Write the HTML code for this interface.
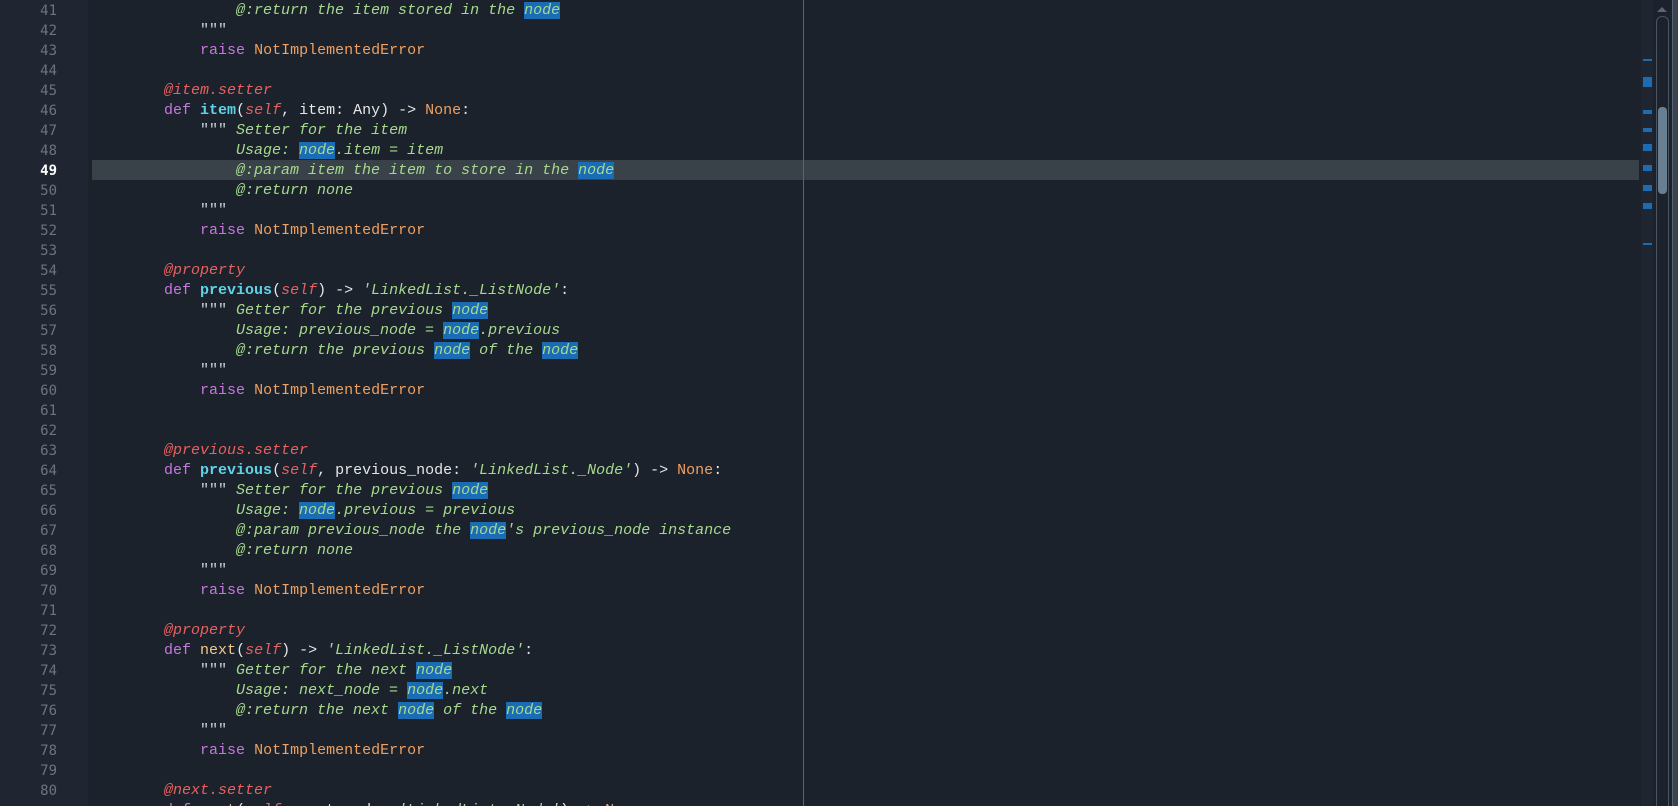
<!DOCTYPE html>
<html><head><style>
*{margin:0;padding:0}
html,body{width:1678px;height:806px;overflow:hidden}
body{background:#1b222c;position:relative;font-family:"Liberation Mono",monospace;font-size:15px}
#g{position:absolute;left:0;top:0;width:88px;height:806px;background:#1f2631}
.n{position:absolute;left:0;width:57px;text-align:right;color:#6b7581;line-height:20px;height:20px;font-family:"DejaVu Sans Mono","Liberation Mono",monospace;font-size:14px}
.cur{color:#fff;font-weight:bold}
#hl{position:absolute;left:92px;top:160px;width:1547px;height:20px;background:#394149}
#ruler{position:absolute;left:803px;top:0;width:1px;height:806px;background:#5a646e}
.l{position:absolute;left:92px;white-space:pre;line-height:20px;height:20px;color:#e6e6e6}
.d{color:#a6d98c;font-style:italic}
.q{color:#c9d1d9}
.k{color:#c678dd}
.f{color:#5fd3e8;font-weight:bold}
.fn{color:#f3c98b}
.dec{color:#e8605f;font-style:italic}
.s{color:#e8605f;font-style:italic}
.o{color:#f0a060}
.st{color:#a6d98c;font-style:italic}
.h{background:#1a6cb5}
#mm{position:absolute;left:1641px;top:0;width:12px;height:806px;background:#1f2631}
.mk{position:absolute;left:1643px;width:9px;background:#1f6bb0}
#sb{position:absolute;left:1653px;top:0;width:19px;height:806px;background:#1b222c}
#tr{position:absolute;left:1656px;top:16px;width:11px;height:800px;border:1px solid #4a5561;border-radius:6px}
#th{position:absolute;left:1658px;top:107px;width:9px;height:87px;background:#6a7e91;border-radius:4px}
#edge{position:absolute;left:1672px;top:0;width:6px;height:806px;background:#3a4350;border-left:1px solid #5a6470}
</style></head><body>
<div id="g"></div>
<div id="hl"></div>
<div id="ruler"></div>
<div id="nums"></div>
<div id="code"></div>
<div id="mm"></div>
<div class="mk" style="top:59px;height:2px"></div>
<div class="mk" style="top:77px;height:10px"></div>
<div class="mk" style="top:110px;height:4px"></div>
<div class="mk" style="top:128px;height:4px"></div>
<div class="mk" style="top:144px;height:7px"></div>
<div class="mk" style="top:165px;height:6px"></div>
<div class="mk" style="top:185px;height:6px"></div>
<div class="mk" style="top:203px;height:6px"></div>
<div class="mk" style="top:243px;height:2px"></div>
<div id="sb"></div>
<div style="position:absolute;left:1657px;top:7px;width:0;height:0;border-left:5px solid transparent;border-right:5px solid transparent;border-bottom:5px solid #5a6672"></div>
<div id="tr"></div>
<div id="th"></div>
<div id="edge"></div>
<script>
var L=[
'            <span class="d">@:return the item stored in the <span class="h">node</span></span>',
'        <span class="q">"""</span>',
'        <span class="k">raise</span> <span class="o">NotImplementedError</span>',
'',
'    <span class="dec">@item.setter</span>',
'    <span class="k">def</span> <span class="f">item</span>(<span class="s">self</span>, item: Any) -&gt; <span class="o">None</span>:',
'        <span class="q">"""</span><span class="d"> Setter for the item</span>',
'            <span class="d">Usage: <span class="h">node</span>.item = item</span>',
'            <span class="d">@:param item the item to store in the <span class="h">node</span></span>',
'            <span class="d">@:return none</span>',
'        <span class="q">"""</span>',
'        <span class="k">raise</span> <span class="o">NotImplementedError</span>',
'',
'    <span class="dec">@property</span>',
'    <span class="k">def</span> <span class="f">previous</span>(<span class="s">self</span>) -&gt; <span class="st">\'LinkedList._ListNode\'</span>:',
'        <span class="q">"""</span><span class="d"> Getter for the previous <span class="h">node</span></span>',
'            <span class="d">Usage: previous_node = <span class="h">node</span>.previous</span>',
'            <span class="d">@:return the previous <span class="h">node</span> of the <span class="h">node</span></span>',
'        <span class="q">"""</span>',
'        <span class="k">raise</span> <span class="o">NotImplementedError</span>',
'',
'',
'    <span class="dec">@previous.setter</span>',
'    <span class="k">def</span> <span class="f">previous</span>(<span class="s">self</span>, previous_node: <span class="st">\'LinkedList._Node\'</span>) -&gt; <span class="o">None</span>:',
'        <span class="q">"""</span><span class="d"> Setter for the previous <span class="h">node</span></span>',
'            <span class="d">Usage: <span class="h">node</span>.previous = previous</span>',
'            <span class="d">@:param previous_node the <span class="h">node</span>\'s previous_node instance</span>',
'            <span class="d">@:return none</span>',
'        <span class="q">"""</span>',
'        <span class="k">raise</span> <span class="o">NotImplementedError</span>',
'',
'    <span class="dec">@property</span>',
'    <span class="k">def</span> <span class="fn">next</span>(<span class="s">self</span>) -&gt; <span class="st">\'LinkedList._ListNode\'</span>:',
'        <span class="q">"""</span><span class="d"> Getter for the next <span class="h">node</span></span>',
'            <span class="d">Usage: next_node = <span class="h">node</span>.next</span>',
'            <span class="d">@:return the next <span class="h">node</span> of the <span class="h">node</span></span>',
'        <span class="q">"""</span>',
'        <span class="k">raise</span> <span class="o">NotImplementedError</span>',
'',
'    <span class="dec">@next.setter</span>',
'    <span class="k">def</span> <span class="fn">next</span>(<span class="s">self</span>, next_node: <span class="st">\'LinkedList._Node\'</span>) -&gt; <span class="o">None</span>:'
];
var h='',n='';
for(var i=0;i<L.length;i++){
 var t=i*20;
 h+='<div class="l" style="top:'+(t+1)+'px">    '+L[i]+'</div>';
 if(i<40) n+='<div class="n'+(i==8?' cur':'')+'" style="top:'+(t+1)+'px">'+(41+i)+'</div>';
}
document.getElementById('code').innerHTML=h;
document.getElementById('nums').innerHTML=n;
</script>
</body></html>
